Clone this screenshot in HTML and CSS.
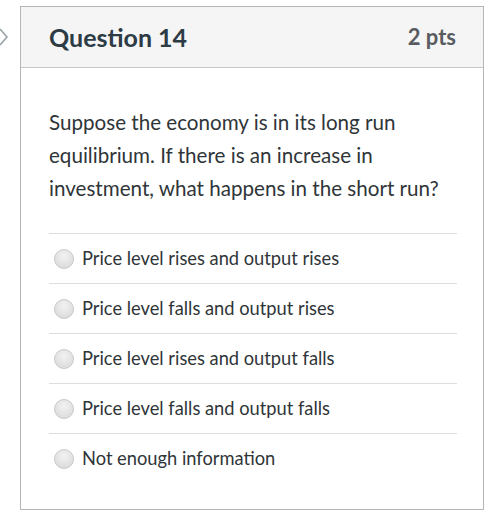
FILE: index.html
```html
<!DOCTYPE html>
<html>
<head>
<meta charset="utf-8">
<link rel="stylesheet" href="styles.css">
</head>
<body>
<div class="page">
  <svg class="chev" width="10" height="20" viewBox="0 0 10 20"><path d="M0 2 L7 10 L0 18" fill="none" stroke="#9aa3a8" stroke-width="1.6"/></svg>
  <div class="card">
    <div class="header">
      <span class="title">Question 14</span>
      <span class="pts">2 pts</span>
    </div>
    <div class="body">
      <p class="qtext">Suppose the economy is in its long run equilibrium. If there is an increase in investment, what happens in the short run?</p>
      <div class="answers">
        <div class="answer"><span class="radio"></span><span>Price level rises and output rises</span></div>
        <div class="answer"><span class="radio"></span><span>Price level falls and output rises</span></div>
        <div class="answer"><span class="radio"></span><span>Price level rises and output falls</span></div>
        <div class="answer"><span class="radio"></span><span>Price level falls and output falls</span></div>
        <div class="answer"><span class="radio"></span><span>Not enough information</span></div>
      </div>
    </div>
  </div>
</div>
</body>
</html>
```
FILE: styles.css
```css
html, body { margin: 0; padding: 0; background: #fff; }
body { font-family: Lato, "Open Sans", sans-serif; color: #2d3b45; }
.page { position: relative; padding: 6px 0 0 20px; }
.chev { position: absolute; left: 0; top: 27px; }
.card {
  width: 462px;
  height: 502px;
  border: 1px solid #b6b6b6;
  box-sizing: content-box;
}
.header {
  background: #f5f5f5;
  border-bottom: 1px solid #c8c8c8;
  display: flex;
  align-items: center;
  justify-content: space-between;
  padding: 0 27px 1px 28px;
  box-sizing: border-box;
  height: 61px;
}
.title { font-size: 25px; font-weight: 700; color: #2d3b45; }
.pts { font-size: 22px; font-weight: 700; color: #585c60; }
.body { padding: 38px 26px 0 28px; }
.qtext {
  margin: 0 0 28px 0;
  font-size: 20.6px;
  line-height: 33px;
  color: #2f3538;
}
.answer {
  border-top: 1px solid #dedede;
  display: flex;
  align-items: center;
  padding-left: 5px;
  padding-bottom: 2px;
  box-sizing: content-box;
  height: 47px;
  font-size: 18.3px;
  color: #2f3538;
}
.radio {
  width: 20px; height: 20px; border-radius: 50%;
  background: radial-gradient(circle at 50% 35%, #f2f2f2, #d6d6d6);
  border: 1px solid #c9c9c9;
  box-sizing: border-box;
  margin-right: 8px;
  margin-top: 2px;
  flex: none;
}
```
